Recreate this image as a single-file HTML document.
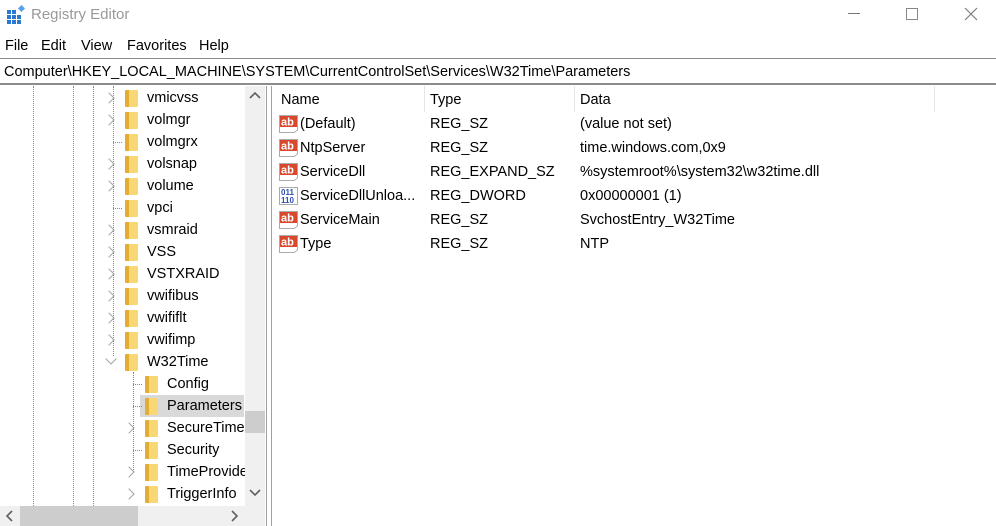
<!DOCTYPE html>
<html><head><meta charset="utf-8"><style>
*{margin:0;padding:0;box-sizing:border-box}
body{width:996px;height:526px;overflow:hidden;background:#fff;font-family:"Liberation Sans",sans-serif;font-size:14.5px;color:#000;position:relative}
.a{position:absolute;white-space:nowrap}
.t{line-height:20px}
.dv{position:absolute;width:0;border-left:1px dotted #888}
.dh{position:absolute;height:0;border-top:1px dotted #888}
.fo{position:absolute;width:13px;height:17px;background:#f8d775;border-left:4px solid #e3ad35;border-radius:1px}
.ch{position:absolute;width:8px;height:8px;border-right:1.8px solid #a0a0a0;border-bottom:1.8px solid #a0a0a0}
.ic{position:absolute;width:19px;height:18px}
</style></head><body>
<!-- title -->
<svg class="a" style="left:6px;top:5px" width="20" height="20" viewBox="0 0 20 20">
<g fill="#2b79d0"><rect x="1" y="5" width="4" height="4"/><rect x="6" y="5" width="4" height="4"/><rect x="1" y="10" width="4" height="4"/><rect x="6" y="10" width="4" height="4"/><rect x="11" y="10" width="4" height="4"/><rect x="1" y="15" width="4" height="4"/><rect x="6" y="15" width="4" height="4"/><rect x="11" y="15" width="4" height="4"/></g>
<rect x="13" y="1" width="5" height="5" fill="#5aa0e6" transform="rotate(45 15.5 3.5)"/></svg>
<div class="a t" style="left:31px;top:5px;color:#999;font-size:15px">Registry Editor</div>
<div class="a" style="left:848px;top:13px;width:12px;border-top:1px solid #777"></div>
<div class="a" style="left:906px;top:8px;width:12px;height:12px;border:1px solid #888"></div>
<svg class="a" style="left:964px;top:7px" width="14" height="14"><path d="M1 1L13 13M13 1L1 13" stroke="#777" stroke-width="1.1"/></svg>
<!-- menu -->
<div class="a t" style="left:5px;top:36px">File</div>
<div class="a t" style="left:41px;top:36px">Edit</div>
<div class="a t" style="left:81px;top:36px">View</div>
<div class="a t" style="left:127px;top:36px">Favorites</div>
<div class="a t" style="left:199px;top:36px">Help</div>
<div class="a" style="left:0;top:58px;width:996px;border-top:1px solid #8c8c8c"></div>
<div class="a t" style="left:4px;top:62px">Computer\HKEY_LOCAL_MACHINE\SYSTEM\CurrentControlSet\Services\W32Time\Parameters</div>
<div class="a" style="left:0;top:83px;width:996px;border-top:2px solid #8c8c8c"></div>
<!-- tree -->
<div class="a" style="left:140px;top:395px;width:104px;height:22px;background:#d9d9d9"></div>
<div class="dv" style="left:33px;top:86px;height:420px"></div>
<div class="dv" style="left:73px;top:86px;height:420px"></div>
<div class="dv" style="left:93px;top:86px;height:420px"></div>
<div class="dv" style="left:113px;top:86px;height:270px"></div>
<div class="dv" style="left:133px;top:372px;height:100px"></div>
<div id="tree"></div>
<!-- vscroll -->
<div class="a" style="left:245px;top:86px;width:20px;height:420px;background:#f0f0f0"></div>
<div class="a" style="left:245px;top:411px;width:20px;height:22px;background:#cdcdcd"></div>
<svg class="a" style="left:249px;top:91px" width="12" height="8"><path d="M1 7L6 2L11 7" stroke="#606060" stroke-width="1.6" fill="none"/></svg>
<svg class="a" style="left:249px;top:489px" width="12" height="8"><path d="M1 1L6 6L11 1" stroke="#606060" stroke-width="1.6" fill="none"/></svg>
<!-- hscroll -->
<div class="a" style="left:0;top:506px;width:245px;height:20px;background:#f0f0f0"></div>
<div class="a" style="left:20px;top:506px;width:118px;height:20px;background:#cdcdcd"></div>
<svg class="a" style="left:5px;top:510px" width="8" height="12"><path d="M7 1L2 6L7 11" stroke="#606060" stroke-width="1.6" fill="none"/></svg>
<svg class="a" style="left:231px;top:510px" width="8" height="12"><path d="M1 1L6 6L1 11" stroke="#606060" stroke-width="1.6" fill="none"/></svg>
<div class="a" style="left:245px;top:506px;width:20px;height:20px;background:#f0f0f0"></div>
<!-- splitter -->
<div class="a" style="left:266px;top:86px;height:440px;border-left:1px solid #a0a0a0"></div>
<div class="a" style="left:271px;top:86px;height:440px;border-left:1px solid #a0a0a0"></div>
<!-- list -->
<div class="a" style="left:424px;top:86px;height:26px;border-left:1px solid #e5e5e5"></div>
<div class="a" style="left:574px;top:86px;height:26px;border-left:1px solid #e5e5e5"></div>
<div class="a" style="left:934px;top:86px;height:26px;border-left:1px solid #e5e5e5"></div>
<div class="a t" style="left:281px;top:90px">Name</div>
<div class="a t" style="left:430px;top:90px">Type</div>
<div class="a t" style="left:580px;top:90px">Data</div>
<div id="list"></div>
<script>
var tr=[["vmicvss",1,0],["volmgr",1,0],["volmgrx",0,0],["volsnap",1,0],["volume",1,0],["vpci",0,0],["vsmraid",1,0],["VSS",1,0],["VSTXRAID",1,0],["vwifibus",1,0],["vwififlt",1,0],["vwifimp",1,0],["W32Time",2,0],["Config",0,1],["Parameters",0,1],["SecureTime",1,1],["Security",0,1],["TimeProvide",1,1],["TriggerInfo",1,1]];
var h="";
tr.forEach(function(r,i){var cy=98+i*22,x=r[2]?145:125;
if(r[1]==1)h+='<div class="ch" style="left:'+(x-20)+'px;top:'+(cy-4)+'px;transform:rotate(-45deg)"></div>';
else if(r[1]==2)h+='<div class="ch" style="left:'+(x-18)+'px;top:'+(cy-7)+'px;transform:rotate(45deg)"></div>';
else h+='<div class="dh" style="left:'+(x-12)+'px;top:'+cy+'px;width:9px"></div>';
h+='<div class="fo" style="left:'+x+'px;top:'+(cy-8)+'px"></div>';
h+='<div class="a t" style="left:'+(x+22)+'px;top:'+(cy-10)+'px;width:'+(245-x-22)+'px;overflow:hidden">'+r[0]+'</div>';});
document.getElementById('tree').innerHTML=h;
var ls=[["(Default)","REG_SZ","(value not set)"],["NtpServer","REG_SZ","time.windows.com,0x9"],["ServiceDll","REG_EXPAND_SZ","%systemroot%\\system32\\w32time.dll",],["ServiceDllUnloa...","REG_DWORD","0x00000001 (1)",1],["ServiceMain","REG_SZ","SvchostEntry_W32Time"],["Type","REG_SZ","NTP"]];
h="";
ls.forEach(function(r,i){var cy=124+i*24;
if(r[3])h+='<svg class="ic" style="left:279px;top:'+(cy-9)+'px" viewBox="0 0 19 18"><rect x="0.5" y="0.5" width="18" height="17" fill="#fff" stroke="#aaa"/><text x="2" y="8" font-size="8" font-weight="bold" fill="#2a4fb0" font-family="Liberation Sans">011</text><text x="2" y="16" font-size="8" font-weight="bold" fill="#2a4fb0" font-family="Liberation Sans">110</text></svg>';
else h+='<svg class="ic" style="left:279px;top:'+(cy-9)+'px" viewBox="0 0 19 18"><path d="M0.5 0.5H18.5V15L15 17.5H0.5Z" fill="#fff" stroke="#aaa"/><rect x="1" y="1" width="17" height="11" fill="#d9482b"/><text x="2" y="10.5" font-size="11" font-weight="bold" fill="#fff" font-family="Liberation Sans">ab</text></svg>';
h+='<div class="a t" style="left:300px;top:'+(cy-10)+'px">'+r[0]+'</div><div class="a t" style="left:430px;top:'+(cy-10)+'px">'+r[1]+'</div><div class="a t" style="left:580px;top:'+(cy-10)+'px">'+r[2]+'</div>';});
document.getElementById('list').innerHTML=h;
</script>
</body></html>
